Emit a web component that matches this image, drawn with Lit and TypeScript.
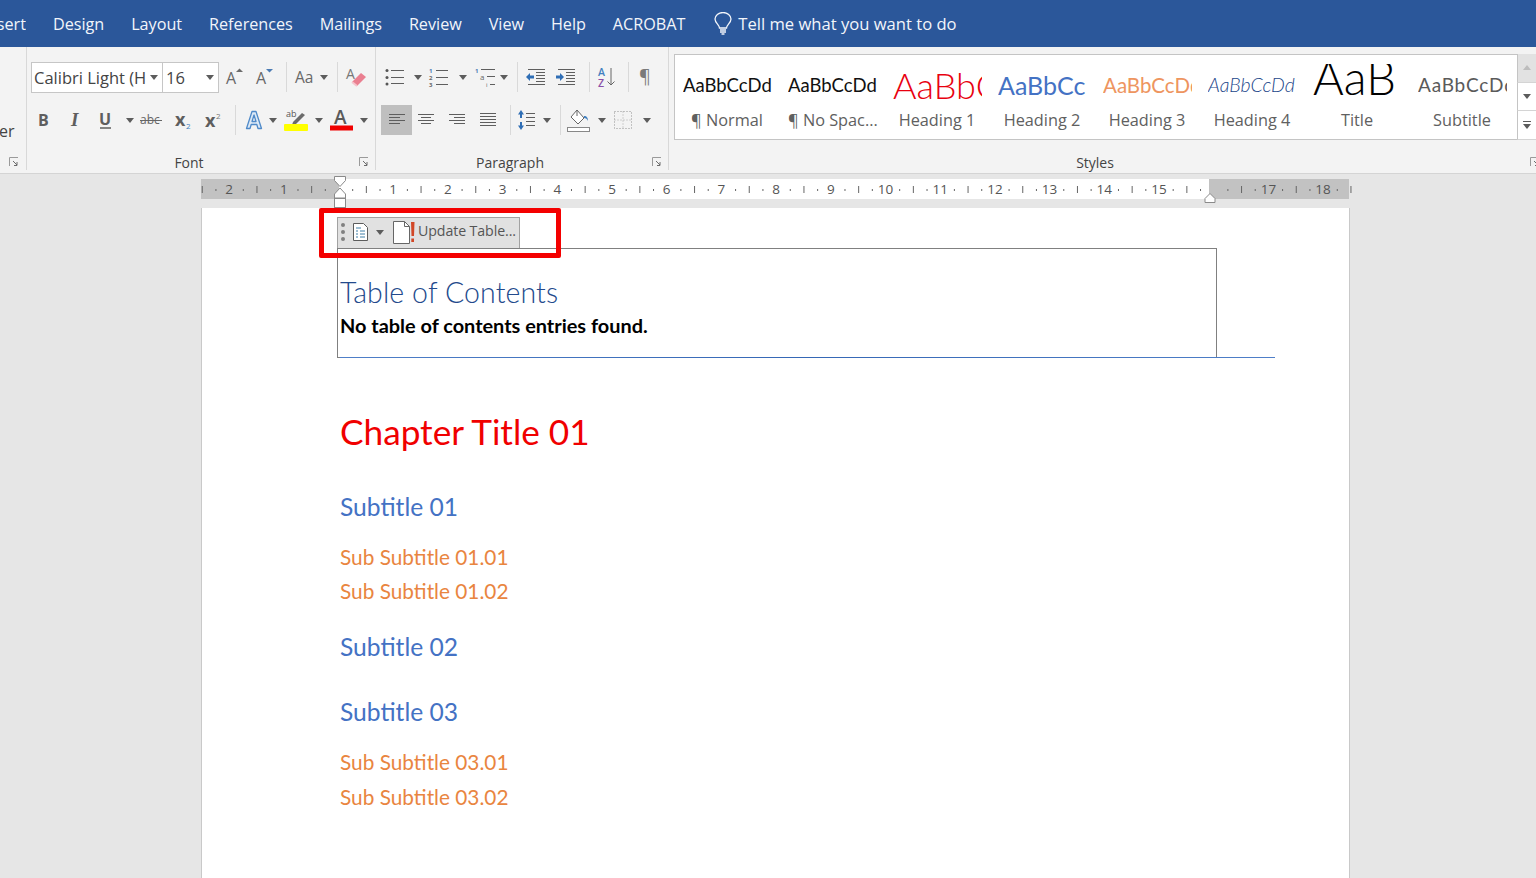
import { LitElement, html, css, svg } from "lit";
import { customElement } from "lit/decorators.js";

type Tool = { x: number; w: number; t: unknown };

const caret = html`<svg width="8" height="5" viewBox="0 0 8 5"><path d="M0 0h8L4 5z" fill="#5c5c5c" /></svg>`;
const launcher = html`<svg width="10" height="10" viewBox="0 0 10 10"><path d="M.5 9V.5H9" fill="none" stroke="#9a9a9a" /><path d="M4 4l4 4M8 5v3.500H5" fill="none" stroke="#6c6c6c" /></svg>`;
const G = "#5e5e5e";
const FT = "'Open Sans',sans-serif";

const lines = (x: number, ys: number[], w: number, c = G, o = 1) =>
  ys.map((y) => svg`<path d="M${x} ${y}.5h${w}" stroke=${c} stroke-opacity=${o} />`);

const ICON = {
  grow: html`<svg width="20" height="20" viewBox="0 0 20 20"><text x="1" y="17" font-family=${FT} font-size="16" fill="#686868">A</text><path d="M11 5h7l-3.500-3.500z" fill="#6c6c6c" /></svg>`,
  shrink: html`<svg width="20" height="20" viewBox="0 0 20 20"><text x="1" y="17" font-family=${FT} font-size="16" fill="#686868">A</text><path d="M11 2h7l-3.500 3.500z" fill="#4c7cb4" /></svg>`,
  aa: html`<svg width="22" height="20" viewBox="0 0 22 20"><text x="0" y="16" font-family=${FT} font-size="15.500" fill="#686868">Aa</text></svg>`,
  eraser: html`<svg width="22" height="24" viewBox="0 0 22 24"><text x="0" y="14" font-family=${FT} font-size="14" fill="#777">A</text><path d="M6 17l9-9 5 4-9 9z" fill="#ea7f90" /><path d="M6 17l5 4" stroke="#f6c3cb" stroke-width="2" /></svg>`,
  b: html`<svg width="14" height="20" viewBox="0 0 14 20"><text x="1" y="16" font-family=${FT} font-size="16" font-weight="700" fill=${G}>B</text></svg>`,
  i: html`<svg width="12" height="20" viewBox="0 0 12 20"><text x="1" y="16" font-family="'Liberation Serif',serif" font-size="19" font-weight="700" font-style="italic" fill=${G}>I</text></svg>`,
  u: html`<svg width="14" height="20" viewBox="0 0 14 20"><text x="0" y="15" font-family=${FT} font-size="16" font-weight="700" fill=${G}>U</text><path d="M1 18h11" stroke=${G} stroke-width="1.500" /></svg>`,
  abc: html`<svg width="22" height="16" viewBox="0 0 22 16"><text x="0" y="12" font-family=${FT} font-size="12" fill="#666">abc</text><path d="M0 8.500h22" stroke="#666" /></svg>`,
  sub: html`<svg width="16" height="20" viewBox="0 0 16 20"><text x="0" y="16" font-family=${FT} font-size="18" font-weight="700" fill=${G}>x</text><text x="11" y="19" font-family=${FT} font-size="8" fill="#3f7fc0">2</text></svg>`,
  sup: html`<svg width="16" height="20" viewBox="0 0 16 20"><text x="0" y="17" font-family=${FT} font-size="18" font-weight="700" fill=${G}>x</text><text x="11" y="9" font-family=${FT} font-size="8" fill="#777">2</text></svg>`,
  effect: html`<svg width="18" height="20" viewBox="0 0 18 20"><path d="M1.500 18.500L7 1.500h4l5.500 17h-3.500l-1.200-4H6.200l-1.200 4zM7 11.500h4L9 5z" fill="#dce9f6" stroke="#4f8ac9" stroke-width="1.300" stroke-linejoin="round" /></svg>`,
  hilite: html`<svg width="24" height="22" viewBox="0 0 24 22"><text x="2" y="8" font-family=${FT} font-size="9" fill="#555">ab</text><path d="M9 13l9-9 3 2-9 9-4 1z" fill="#6b6b6b" /><rect y="15" width="24" height="7" rx="1" fill="#ffff00" /></svg>`,
  color: html`<svg width="24" height="22" viewBox="0 0 24 22"><text x="4" y="15" font-family=${FT} font-size="19" font-weight="600" fill="#5a5a5a">A</text><rect y="16.500" width="23" height="5" fill="#f00000" /></svg>`,
  bullets: html`<svg width="20" height="18" viewBox="0 0 20 18"><circle cx="2" cy="2.500" r="1.500" fill="#555" /><circle cx="2" cy="9.500" r="1.500" fill="#555" /><circle cx="2" cy="16" r="1.500" fill="#555" />${lines(6, [2, 9, 15], 13)}</svg>`,
  nums: html`<svg width="20" height="20" viewBox="0 0 20 20"><text x="0" y="6" font-family=${FT} font-size="6" font-weight="700" fill="#4c7cb4">1</text><text x="0" y="13" font-family=${FT} font-size="6" font-weight="700" fill="#666">2</text><text x="0" y="20" font-family=${FT} font-size="6" font-weight="700" fill="#666">3</text>${lines(7, [3, 10, 17], 12)}</svg>`,
  multi: html`<svg width="22" height="20" viewBox="0 0 22 20"><text x="0" y="6" font-family=${FT} font-size="6" font-weight="700" fill="#4c7cb4">1</text><text x="5" y="13" font-family=${FT} font-size="8" fill="#666">a</text><text x="11" y="20" font-family=${FT} font-size="6" fill="#666">i</text>${lines(6, [2], 14)}${lines(12, [9], 8)}${lines(15, [17], 5)}</svg>`,
  outdent: html`<svg width="20" height="16" viewBox="0 0 20 16"><path d="M0 8l4-4v2.500h4v3H4V12z" fill="#2f6eb5" />${lines(2, [0, 15], 17)}${lines(10, [3, 6, 9, 12], 9)}</svg>`,
  indent: html`<svg width="20" height="16" viewBox="0 0 20 16"><path d="M8 8L4 4v2.500H0v3h4V12z" fill="#2f6eb5" />${lines(2, [0, 15], 17)}${lines(10, [3, 6, 9, 12], 9)}</svg>`,
  sort: html`<svg width="18" height="20" viewBox="0 0 18 20"><text x="0" y="9" font-family=${FT} font-size="10.500" font-weight="600" fill="#3f7fc0">A</text><text x="0" y="20" font-family=${FT} font-size="10.500" font-weight="600" fill="#8a4fa8">Z</text><path d="M13 1v17M9.500 14.500L13 18l3.500-3.500" fill="none" stroke="#666" /></svg>`,
  pil: html`<svg width="14" height="20" viewBox="0 0 14 20"><text x="0" y="16" font-family=${FT} font-size="18" fill="#7a7a7a">¶</text></svg>`,
  left: html`<svg width="16" height="12" viewBox="0 0 16 12">${lines(0, [0, 6], 16)}${lines(0, [3, 9], 11)}</svg>`,
  center: html`<svg width="16" height="12" viewBox="0 0 16 12">${lines(0, [0, 6], 16)}${lines(3, [3, 9], 10)}</svg>`,
  right: html`<svg width="16" height="12" viewBox="0 0 16 12">${lines(0, [0, 6], 16)}${lines(5, [3, 9], 11)}</svg>`,
  just: html`<svg width="16" height="14" viewBox="0 0 16 14">${lines(0, [0, 3, 6, 9, 12], 16)}</svg>`,
  spacing: html`<svg width="18" height="20" viewBox="0 0 18 20"><path d="M3 0l3 4.500H4V8H2V4.500H0zM3 20l3-4.500H4V12H2v3.500H0z" fill="#2f6eb5" />${lines(8, [3, 7, 11, 15], 9)}</svg>`,
  shade: html`<svg width="24" height="23" viewBox="0 0 24 23"><path d="M10 1l7 8-6 6-7-7z" fill="#fff" stroke="#666" /><path d="M10 1v6" stroke="#666" /><path d="M17 7c3 0 4 2 4 5-1-2-2-3-4-3z" fill="#3f7fc0" /><rect x=".5" y="18.500" width="22" height="4" fill="#fff" stroke="#888" /></svg>`,
  borders: html`<svg width="18" height="18" viewBox="0 0 18 18"><path d="M.500 .500h17v17H.500z" fill="none" stroke="#777" stroke-width=".8" stroke-dasharray="1 2" /><path d="M9 .500v17M.500 9h17" fill="none" stroke="#999" stroke-width=".8" stroke-dasharray="1 2" /></svg>`,
};

const sep = html`<i class="sep"></i>`;
const fontRow2: Tool[] = [
  { x: 44, w: 14, t: ICON.b },
  { x: 76, w: 12, t: ICON.i },
  { x: 106, w: 14, t: ICON.u },
  { x: 130, w: 8, t: caret },
  { x: 151, w: 22, t: ICON.abc },
  { x: 183, w: 16, t: ICON.sub },
  { x: 213, w: 16, t: ICON.sup },
  { x: 235, w: 1, t: sep },
  { x: 254, w: 18, t: ICON.effect },
  { x: 273, w: 8, t: caret },
  { x: 296, w: 24, t: ICON.hilite },
  { x: 319, w: 8, t: caret },
  { x: 342, w: 24, t: ICON.color },
  { x: 364, w: 8, t: caret },
];
const fontRow1: Tool[] = [
  { x: 234, w: 20, t: ICON.grow },
  { x: 264, w: 20, t: ICON.shrink },
  { x: 285, w: 1, t: sep },
  { x: 305, w: 22, t: ICON.aa },
  { x: 323, w: 8, t: caret },
  { x: 336, w: 1, t: sep },
  { x: 356, w: 22, t: ICON.eraser },
];
const paraRow1: Tool[] = [
  { x: 395, w: 20, t: ICON.bullets },
  { x: 418, w: 8, t: caret },
  { x: 439, w: 20, t: ICON.nums },
  { x: 463, w: 8, t: caret },
  { x: 486, w: 22, t: ICON.multi },
  { x: 504, w: 8, t: caret },
  { x: 517, w: 1, t: sep },
  { x: 536, w: 20, t: ICON.outdent },
  { x: 566, w: 20, t: ICON.indent },
  { x: 589, w: 1, t: sep },
  { x: 607, w: 18, t: ICON.sort },
  { x: 628, w: 1, t: sep },
  { x: 646, w: 14, t: ICON.pil },
];
const paraRow2: Tool[] = [
  { x: 396.5, w: 31, t: html`<span class="on">${ICON.left}</span>` },
  { x: 426, w: 16, t: ICON.center },
  { x: 457, w: 16, t: ICON.right },
  { x: 488, w: 16, t: ICON.just },
  { x: 510, w: 1, t: sep },
  { x: 527, w: 18, t: ICON.spacing },
  { x: 547, w: 8, t: caret },
  { x: 560, w: 1, t: sep },
  { x: 579, w: 24, t: ICON.shade },
  { x: 602, w: 8, t: caret },
  { x: 623, w: 18, t: ICON.borders },
  { x: 647, w: 8, t: caret },
];

const STYLES = [
  { p: "AaBbCcDd", l: "¶ Normal", c: "s-normal" },
  { p: "AaBbCcDd", l: "¶ No Spac...", c: "s-normal" },
  { p: "AaBbC", l: "Heading 1", c: "s-h1" },
  { p: "AaBbCc", l: "Heading 2", c: "s-h2" },
  { p: "AaBbCcDd", l: "Heading 3", c: "s-h3" },
  { p: "AaBbCcDd", l: "Heading 4", c: "s-h4" },
  { p: "AaB", l: "Title", c: "s-title" },
  { p: "AaBbCcDd", l: "Subtitle", c: "s-sub" },
];

const DOC = [
  { t: "Chapter Title 01", c: "d1", m: 51 },
  { t: "Subtitle 01", c: "d2", m: 39 },
  { t: "Sub Subtitle 01.01", c: "d3", m: 22 },
  { t: "Sub Subtitle 01.02", c: "d3", m: 8 },
  { t: "Subtitle 02", c: "d2", m: 28 },
  { t: "Subtitle 03", c: "d2", m: 35 },
  { t: "Sub Subtitle 03.01", c: "d3", m: 22 },
  { t: "Sub Subtitle 03.02", c: "d3", m: 9 },
];

const TABS = ["Design", "Layout", "References", "Mailings", "Review", "View", "Help", "ACROBAT"];

function ruler() {
  const X0 = 137.5;
  const U = 54.7;
  const marks = [];
  for (let n = -3; n <= 18; n++) {
    const p = (f: number) => X0 + U * (n + f);
    if (n !== 0 && n !== 16 && p(0) > 0) {
      marks.push(svg`<text x=${p(0)} y="20" text-anchor="middle" font-family=${FT} font-size="13.500" fill="#555">${Math.abs(n)}</text>`);
    }
    if (p(0.5) > 0) marks.push(svg`<rect x=${p(0.5)} y="12" width="1" height="7" fill="#666" />`);
    for (const f of [0.25, 0.75]) {
      if (p(f) > 0 && p(f) < 1148) marks.push(svg`<rect x=${p(f)} y="15" width="1" height="2" fill="#666" />`);
    }
  }
  return html`<svg class="ruler" width="1149" height="34" viewBox="0 0 1149 34">
    <rect x="0" y="5" width="1148" height="20" fill="#c2c2c2" />
    <rect x="138" y="5" width="870" height="20" fill="#fff" />
    ${marks}
    <path d="M133.500 2.500h11v4l-5.500 6-5.500-6z" fill="#fff" stroke="#8a8a8a" />
    <path d="M139 14l5.500 6v4h-11v-4z" fill="#fff" stroke="#8a8a8a" />
    <rect x="133.500" y="24.500" width="11" height="9" fill="#fff" stroke="#8a8a8a" />
    <path d="M1009 19.500l5 5v4h-10v-4z" fill="#fff" stroke="#8a8a8a" />
  </svg>`;
}

@customElement("app-root")
export class AppRoot extends LitElement {
  static styles = css`
    :host { display: block; width: 1536px; height: 878px; overflow: hidden; background: #e6e6e6; font-family: "Open Sans", sans-serif; }
    .tabs { display: flex; align-items: center; height: 47px; gap: 26.900px; background: #2b579a; color: #f2f5fa; font-size: 16.200px; white-space: nowrap; }
    .clip { width: 26px; display: flex; justify-content: flex-end; overflow: hidden; }
    .tell { display: flex; align-items: center; gap: 6px; margin-left: 2px; font-size: 16.600px; }
    .ribbon { display: flex; height: 127px; background: #f3f3f3; border-bottom: 1px solid #d4d4d4; box-sizing: border-box; }
    .group { display: flex; flex-direction: column; box-sizing: border-box; border-right: 1px solid #d8d8d8; margin-bottom: 3px; }
    .g0 { width: 27px; }
    .g1 { width: 349px; }
    .g2 { width: 293px; }
    .g3 { flex: 1; border-right: 0; min-width: 0; }
    .er { font-size: 16px; color: #444; margin: 73px 0 0 -1px; line-height: 22px; height: 22px; flex: none; }
    .rows { flex: none; height: 94px; padding-top: 15px; box-sizing: border-box; display: flex; flex-direction: column; gap: 13px; }
    .row { display: flex; align-items: center; height: 30px; }
    .row svg { overflow: visible; }
    .row > span { display: flex; justify-content: center; align-items: center; flex: none; height: 30px; }
    .combo { display: flex; height: 31px; flex: none; margin-left: 4px; background: #fff; border: 1px solid #c6c6c6; box-sizing: border-box; font-size: 16.500px; color: #444; align-items: center; }
    .c-font { width: 131px; padding: 0 4px 0 2px; display: flex; justify-content: space-between; align-items: center; border-right: 1px solid #c6c6c6; height: 100%; box-sizing: border-box; white-space: nowrap; }
    .c-size { width: 55px; padding: 0 4px 0 3px; display: flex; justify-content: space-between; align-items: center; box-sizing: border-box; }
    .sep { display: block; width: 1px; height: 30px; background: #d9d9d9; }
    .on { display: flex; width: 31px; height: 30px; background: #bfbfbf; align-items: center; justify-content: center; }
    .foot { display: flex; flex: none; height: 16px; align-items: center; margin-top: auto; }
    .foot b { flex: 1; text-align: center; font-weight: 400; font-size: 14px; color: #444; }
    .launch { width: 24px; padding-left: 2px; box-sizing: border-box; display: flex; justify-content: center; }
    .g0 .launch { width: 26px; }
    .g3 .launch { width: 19px; padding-left: 0; justify-content: flex-end; margin-right: -4px; }
    .stylewrap { display: flex; flex: none; margin: 7px 0 0 5px; height: 86px; }
    .gallery { display: flex; width: 843px; box-sizing: border-box; background: #fff; border: 1px solid #c4c4c4; border-right: 0; }
    .style { width: 105px; flex: none; box-sizing: border-box; padding: 0 0 0 8px; }
    .preview { height: 45px; padding-bottom: 4px; box-sizing: border-box; margin-top: 9px; width: 89px; overflow: hidden; display: flex; align-items: center; white-space: nowrap; font-family: Lato, sans-serif; }
    .label { height: 24px; margin-top: -1px; width: 88px; text-align: center; font-size: 16.300px; color: #606060; white-space: nowrap; line-height: 24px; }
    .s-normal { font-size: 18.500px; color: #111; }
    .s-h1 { font-size: 36px; color: #e8000f; font-weight: 300; }
    .s-h2 { font-size: 25px; color: #4472c4; }
    .s-h3 { font-size: 20.500px; color: #ee9560; }
    .s-h4 { font-size: 19.500px; color: #23478a; font-style: italic; font-weight: 300; }
    .s-title { font-size: 47px; color: #000; font-weight: 300; line-height: 26px; align-items: flex-start; }
    .s-sub { font-size: 19px; color: #5a5a5a; letter-spacing: .8px; }
    .scroll { width: 19px; display: flex; flex-direction: column; }
    .scroll span { display: flex; flex: 1; align-items: center; justify-content: center; background: #fff; border: 1px solid #d4d4d4; border-left-color: #c4c4c4; border-right: 0; border-top: 0; }
    .scroll span:first-child { background: #e2e2e2; }
    .ruler { display: block; margin-left: 201px; overflow: visible; }
    .page { position: relative; margin-left: 201px; width: 1149px; height: 670px; box-sizing: border-box; background: #fff; border: 1px solid #c9c9c9; border-width: 0 1px; padding-top: 9px; }
    .bar { display: flex; align-items: center; height: 32px; width: 183px; padding-bottom: 4px; margin-left: 135px; box-sizing: border-box; background: #e1e1e1; border: 1px solid #a2a2a2; border-bottom: 0; color: #555; font-size: 14.200px; white-space: nowrap; }
    .grip { display: flex; flex-direction: column; gap: 3px; margin-left: 3px; }
    .grip i { display: block; width: 4px; height: 4px; border-radius: 50%; background: #808080; }
    .barcaret { display: flex; margin: 2px 8px 0 8px; }
    .barpage { display: flex; margin-top: 2px; }
    .bartext { margin: 0 0 2px 2px; letter-spacing: -.1px; }
    .docicon { margin-left: 8px; display: flex; }
    .toc { width: 880px; height: 110px; margin-left: 135px; margin-top: -1px; box-sizing: border-box; border: 1px solid #808080; padding: 24px 0 0 2px; }
    .toc h1 { margin: 0; font: 300 28.500px/38px Lato, sans-serif; color: #234a8c; letter-spacing: .1px; }
    .toc p { margin: -1px 0 0; font: 700 19.900px/30px Lato, sans-serif; color: #000; }
    .line { width: 935px; height: 1px; margin: -1px 0 0 138px; background: linear-gradient(90deg, #4f7fc8, #3567b5 50%, #4f7fc8); position: relative; }
    .doc { margin: 0 0 0 138px; font-family: Lato, sans-serif; }
    .d1 { font-size: 35.200px; line-height: 44px; color: #f00000; }
    .d2 { font-size: 24.600px; line-height: 30px; color: #4472c4; }
    .d3 { font-size: 20.800px; line-height: 26px; color: #e9853f; }
    .mark { position: absolute; left: 117px; top: 0; width: 242px; height: 50px; box-sizing: border-box; border: 5px solid #f40000; border-radius: 2px; }
  `;

  private tools(start: number, items: Tool[]) {
    let end = start;
    return items.map((it) => {
      const left = it.x - it.w / 2;
      const m = left - end;
      end = left + it.w;
      return html`<span style="width:${it.w}px;margin-left:${m}px">${it.t}</span>`;
    });
  }

  render() {
    return html`
      <div class="tabs">
        <span class="clip"><span>Insert</span></span>
        ${TABS.map((t) => html`<span>${t}</span>`)}
        <span class="tell">
          <svg width="18" height="23" viewBox="0 0 18 23"><path d="M5.500 16c0-3-4.500-5-4.500-9a8 6.500 0 0 1 16 0c0 4-4.500 6-4.500 9zM6 18h6M6 20h6M7.500 22h3" fill="none" stroke="#f2f5fa" stroke-width="1.300" /></svg>
          <span>Tell me what you want to do</span>
        </span>
      </div>
      <div class="ribbon">
        <div class="group g0">
          <div class="er">er</div>
          <div class="foot"><span class="launch">${launcher}</span></div>
        </div>
        <div class="group g1">
          <div class="rows">
            <div class="row">
              <div class="combo">
                <span class="c-font">Calibri Light (H${caret}</span>
                <span class="c-size">16${caret}</span>
              </div>
              ${this.tools(218, fontRow1)}
            </div>
            <div class="row">${this.tools(27, fontRow2)}</div>
          </div>
          <div class="foot"><b>Font</b><span class="launch">${launcher}</span></div>
        </div>
        <div class="group g2">
          <div class="rows">
            <div class="row">${this.tools(376, paraRow1)}</div>
            <div class="row">${this.tools(376, paraRow2)}</div>
          </div>
          <div class="foot"><b>Paragraph</b><span class="launch">${launcher}</span></div>
        </div>
        <div class="group g3">
          <div class="stylewrap">
            <div class="gallery">
              ${STYLES.map(
                (s) => html`<div class="style"><div class="preview ${s.c}">${s.p}</div><div class="label">${s.l}</div></div>`
              )}
            </div>
            <div class="scroll">
              <span><svg width="8" height="5" viewBox="0 0 8 5"><path d="M0 5h8L4 0z" fill="#bdbdbd" /></svg></span>
              <span>${caret}</span>
              <span><svg width="8" height="8" viewBox="0 0 8 8"><path d="M0 0h8v1H0z" fill="#5c5c5c" /><path d="M0 3h8L4 8z" fill="#5c5c5c" /></svg></span>
            </div>
          </div>
          <div class="foot"><b>Styles</b><span class="launch">${launcher}</span></div>
        </div>
      </div>
      ${ruler()}
      <div class="page">
        <div class="bar">
          <span class="grip"><i></i><i></i><i></i></span>
          <span class="docicon"><svg width="15" height="18" viewBox="0 0 15 18"><path d="M.500 .500h10l4 4v13H.500z" fill="#fff" stroke="#5c5c5c" /><path d="M3 5h5M3 8h2M7 8h5M3 11h2M7 11h5M3 14h2M7 14h5" stroke="#3f7fa8" /></svg></span>
          <span class="barcaret">${caret}</span>
          <span class="barpage"><svg width="24" height="23" viewBox="0 0 24 23"><path d="M1.500 .500h11l5 5v17h-16z" fill="#fff" stroke="#666" /><path d="M12.500 .500v5h5" fill="none" stroke="#666" /><path d="M19 1h3.500l-.5 14h-2.500zM19.300 17.500h2.700V21h-2.700z" fill="#d24726" /></svg></span>
          <span class="bartext">Update Table...</span>
        </div>
        <div class="toc">
          <h1>Table of Contents</h1>
          <p>No table of contents entries found.</p>
        </div>
        <div class="line"></div>
        ${DOC.map((d) => html`<div class="doc ${d.c}" style="margin-top:${d.m}px">${d.t}</div>`)}
        <div class="mark"></div>
      </div>
    `;
  }
}
